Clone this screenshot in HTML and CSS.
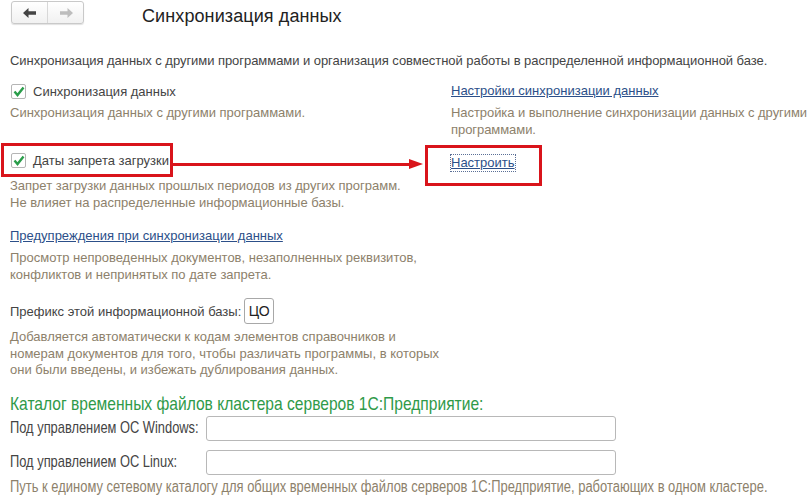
FILE: index.html
```html
<!DOCTYPE html>
<html lang="ru">
<head>
<meta charset="utf-8">
<title>Синхронизация данных</title>
<link rel="stylesheet" href="styles.css">
</head>
<body>
<div class="page">
  <header class="header">
    <div class="nav">
      <span class="nav-btn">
        <svg width="16" height="12" viewBox="0 0 16 12"><path d="M1 6 L6.5 1 L6.5 4.3 L14 4.3 L14 7.7 L6.5 7.7 L6.5 11 Z" fill="#444"/></svg>
      </span>
      <span class="nav-btn">
        <svg width="16" height="12" viewBox="0 0 16 12"><path d="M15 6 L9.5 1 L9.5 4.3 L2 4.3 L2 7.7 L9.5 7.7 L9.5 11 Z" fill="#bdbdbd"/></svg>
      </span>
    </div>
    <h1 class="title">Синхронизация данных</h1>
  </header>

  <p class="intro">Синхронизация данных с другими программами и организация совместной работы в распределенной информационной базе.</p>

  <div class="grid">
    <div class="cell">
      <label class="check"><span class="box"><svg width="12" height="11" viewBox="0 0 12 11"><path d="M1.5 5.5 L4.5 9 L10.5 1.5" stroke="#2a9d4a" stroke-width="2.4" fill="none"/></svg></span>Синхронизация данных</label>
      <p class="desc">Синхронизация данных с другими программами.</p>
    </div>
    <div class="cell">
      <a class="link">Настройки синхронизации данных</a>
      <p class="desc tight">Настройка и выполнение синхронизации данных с другими<br>программами.</p>
    </div>
    <div class="cell">
      <label class="check"><span class="box"><svg width="12" height="11" viewBox="0 0 12 11"><path d="M1.5 5.5 L4.5 9 L10.5 1.5" stroke="#2a9d4a" stroke-width="2.4" fill="none"/></svg></span>Даты запрета загрузки</label>
      <p class="desc desc-low">Запрет загрузки данных прошлых периодов из других программ.<br>Не влияет на распределенные информационные базы.</p>
    </div>
    <div class="cell">
      <a class="link focus">Настроить</a>
    </div>
  </div>

  <section class="block">
    <a class="link">Предупреждения при синхронизации данных</a>
    <p class="desc">Просмотр непроведенных документов, незаполненных реквизитов,<br>конфликтов и непринятых по дате запрета.</p>
  </section>

  <section class="block prefix-block">
    <div class="prefix">
      <span>Префикс этой информационной базы:</span>
      <span class="prefix-box">ЦО</span>
    </div>
    <p class="desc">Добавляется автоматически к кодам элементов справочников и<br>номерам документов для того, чтобы различать программы, в которых<br>они были введены, и избежать дублирования данных.</p>
  </section>

  <section class="cluster">
    <h2 class="green"><span class="squeeze">Каталог временных файлов кластера серверов 1С:Предприятие:</span></h2>
    <div class="field">
      <span class="field-label"><span class="squeeze">Под управлением ОС Windows:</span></span>
      <span class="input"></span>
    </div>
    <div class="field field-2">
      <span class="field-label"><span class="squeeze">Под управлением ОС Linux:</span></span>
      <span class="input"></span>
    </div>
    <p class="note"><span class="squeeze">Путь к единому сетевому каталогу для общих временных файлов серверов 1С:Предприятие, работающих в одном кластере.</span></p>
  </section>

  <div class="mark mark-a"></div>
  <div class="mark mark-b"></div>
  <div class="arrow">
    <span class="arrow-line"></span>
    <span class="arrow-head"></span>
  </div>
</div>
</body>
</html>
```

FILE: styles.css
```css
* { box-sizing: border-box; }
html, body { margin: 0; padding: 0; background: #fff; }
body {
  font-family: Arial, "Liberation Sans", sans-serif;
  font-size: 13px;
  color: #444;
}
.page { position: relative; width: 807px; height: 495px; overflow: hidden; }

.header { display: flex; align-items: flex-start; height: 36px; }
.nav {
  display: flex;
  margin: 1px 0 0 11px;
  width: 73px;
  height: 23px;
  border: 1px solid #c9c9c9;
  border-radius: 3px;
  background: linear-gradient(#ffffff, #f1f1f1);
  box-shadow: 0 1px 1px rgba(0,0,0,0.12);
}
.nav-btn { flex: 1; display: flex; align-items: center; justify-content: center; }
.nav-btn + .nav-btn { border-left: 1px solid #d8d8d8; }
.title {
  margin: 5px 0 0 58px;
  font-size: 18px;
  font-weight: normal;
  color: #222;
  line-height: 22px;
  letter-spacing: 0.1px;
}

.intro { margin: 17px 0 0 10px; line-height: 16px; color: #444; white-space: nowrap; letter-spacing: -0.05px; }

.grid {
  display: grid;
  grid-template-columns: 441px 1fr;
  margin: 14px 0 0 10px;
  row-gap: 14px;
}
.cell { white-space: nowrap; }
.check { display: flex; align-items: center; height: 16px; color: #444; }
.box {
  width: 15px; height: 15px;
  margin: 0 7px 0 1px;
  border: 1px solid #b5b5b5;
  border-radius: 2px;
  background: #fff;
  display: flex; align-items: center; justify-content: center;
}
.desc { margin: 6px 0 0; line-height: 16.5px; color: #8d816b; white-space: nowrap; }
.tight { letter-spacing: -0.06px; }
.desc-low { margin-top: 10px; }
.link { color: #2c4f89; text-decoration: underline; line-height: 16px; display: inline-block; }
.focus { outline: 1px dotted #5a6f96; margin-top: 3px; }

.block { margin: 17px 0 0 10px; }
.prefix-block { margin-top: 15px; }
.prefix { display: flex; align-items: center; gap: 3px; height: 26px; }
.prefix-box {
  display: inline-flex; align-items: center; justify-content: center;
  width: 30px; height: 26px;
  border: 1px solid #a8a8a8;
  border-radius: 3px;
  font-size: 14px;
  color: #222;
}
.prefix-block .desc { margin-top: 5px; }

.cluster { margin: 15px 0 0 10px; }
.squeeze {
  display: inline-block;
  white-space: nowrap;
  transform: scaleX(0.82);
  transform-origin: 0 50%;
}
.green { margin: 0; font-size: 19px; font-weight: normal; color: #2f9a49; line-height: 20px; white-space: nowrap; }
.field { display: flex; align-items: center; margin-top: 2px; }
.field-2 { margin-top: 9px; }
.field-label { width: 196px; font-size: 15.7px; color: #444; white-space: nowrap; overflow: visible; }
.input {
  flex: none;
  width: 410px; height: 25px;
  border: 1px solid #b8b8b8;
  border-radius: 3px;
  background: #fff;
}
.note { margin: 4px 0 0; font-size: 15.8px; line-height: 16px; color: #8d816b; white-space: nowrap; }

.mark { position: absolute; border: 3px solid #d9141b; }
.mark-a { left: 1px; top: 143px; width: 172px; height: 34px; }
.mark-b { left: 425px; top: 145px; width: 117px; height: 41px; }
.arrow { position: absolute; left: 173px; top: 161px; width: 250px; height: 8px; }
.arrow-line { position: absolute; left: 0; top: 2px; width: 240px; height: 3px; background: #d9141b; }
.arrow-head {
  position: absolute; right: 0; top: -2px;
  width: 0; height: 0;
  border-left: 14px solid #d9141b;
  border-top: 5.5px solid transparent;
  border-bottom: 5.5px solid transparent;
}
```
